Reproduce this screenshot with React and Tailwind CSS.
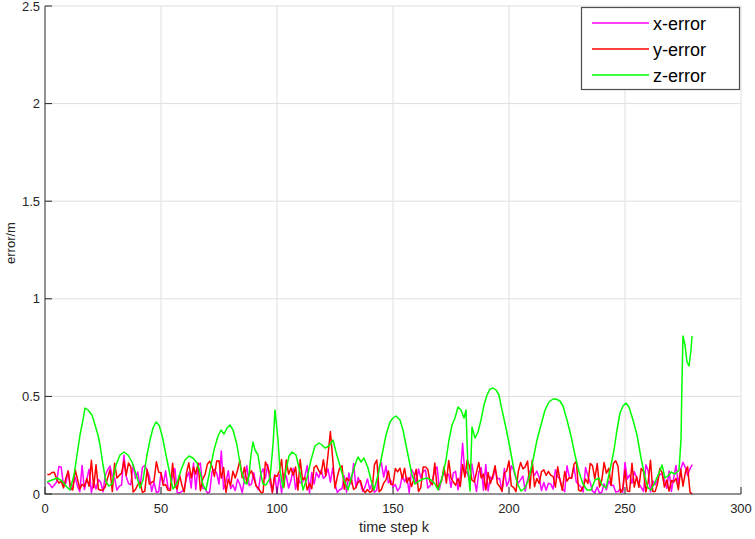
import React from 'react'

// axes mapping (pixels)
const X0 = 45, X1 = 741, Y0 = 494, Y1 = 6
const px = k => X0 + (k / 300) * (X1 - X0)
const py = v => Y0 - (v / 2.5) * (Y0 - Y1)

function rng(seed) {
  let a = seed
  return () => {
    a |= 0; a = (a + 0x6D2B79F5) | 0
    let t = Math.imul(a ^ (a >>> 15), 1 | a)
    t = (t + Math.imul(t ^ (t >>> 7), 61 | t)) ^ t
    return ((t ^ (t >>> 14)) >>> 0) / 4294967296
  }
}

// z-error traced from the figure, in pixel coords
const GREEN = [[47,482],[52,480],[57,478],[62,481],[66,486],[70,490],[74,475],[77,455],[80,435],[83,420],[85,408],[88,410],[92,415],[95,425],[98,435],[100,445],[103,465],[106,482],[109,486],[112,484],[116,465],[120,455],[124,452],[128,455],[132,462],[136,474],[140,488],[143,480],[147,455],[150,440],[153,428],[156,422],[159,425],[162,435],[166,455],[170,475],[173,489],[177,483],[181,470],[185,460],[189,456],[193,458],[197,463],[200,472],[203,485],[206,490],[210,470],[214,450],[218,436],[221,430],[224,434],[227,428],[230,425],[233,430],[237,445],[241,470],[245,483],[247,484],[249,475],[251,455],[253,442],[255,450],[258,455],[261,475],[263,484],[266,485],[270,478],[273,445],[275,410],[278,440],[280,470],[283,488],[286,470],[289,456],[292,452],[296,455],[300,472],[303,490],[307,478],[311,460],[315,446],[319,443],[322,445],[325,448],[329,446],[333,440],[336,452],[340,466],[344,480],[348,490],[352,475],[356,462],[358,457],[361,462],[364,458],[368,468],[371,480],[374,490],[378,475],[382,455],[386,435],[390,422],[393,418],[396,416],[400,420],[403,430],[406,445],[409,460],[412,475],[415,484],[419,481],[423,479],[427,478],[431,480],[435,484],[438,490],[442,478],[446,460],[449,440],[452,425],[455,418],[458,407],[461,410],[464,418],[466,410],[468,470],[470,491],[472,427],[475,438],[478,432],[481,420],[484,405],[487,395],[490,389],[493,388],[496,390],[499,395],[502,410],[506,428],[510,448],[514,470],[518,485],[521,491],[525,488],[529,478],[533,460],[537,440],[541,425],[545,410],[549,402],[553,399],[556,399],[560,401],[563,406],[567,420],[571,436],[575,455],[579,472],[583,484],[587,490],[591,490],[595,480],[599,478],[602,485],[606,488],[610,470],[614,450],[617,430],[620,413],[623,406],[626,403],[629,407],[633,420],[637,435],[641,458],[645,477],[648,488],[651,490],[655,482],[659,473],[662,465],[665,478],[668,476],[671,472],[675,474],[679,470],[681,440],[682,380],[683,336],[685,345],[687,362],[689,366],[691,350],[692,336]]

function noisy(seed, base, amp, spikes) {
  const r = rng(seed)
  const pts = []
  for (let k = 1; k <= 279; k++) {
    let v = base + Math.pow(r(), 1.4) * amp
    if (spikes[k] !== undefined) v = spikes[k]
    pts.push([px(k), py(v)])
  }
  return pts
}

const RED = noisy(7, 0.008, 0.17, { 1: 0.1, 2: 0.1, 3: 0.11, 122: 0.2, 123: 0.32, 124: 0.18, 279: 0 })
const MAG = noisy(21, 0.005, 0.16, { 1: 0.06, 2: 0.05, 34: 0.2, 76: 0.22, 180: 0.26, 278: 0.13, 279: 0.15 })

const toPath = pts => pts.map((p, i) => `${i ? 'L' : 'M'}${p[0].toFixed(1)} ${p[1].toFixed(1)}`).join('')

const XT = [0, 50, 100, 150, 200, 250, 300]
const YT = [0, 0.5, 1, 1.5, 2, 2.5]

const LEGEND = [
  { label: 'x-error', color: '#ff00ff', y: 23 },
  { label: 'y-error', color: '#ff0000', y: 49 },
  { label: 'z-error', color: '#00ff00', y: 75 },
]

export default function App() {
  return (
    <div className="w-[755px] h-[539px] bg-white overflow-hidden font-['Liberation_Sans',Arial,sans-serif]">
      <svg width="755" height="539" viewBox="0 0 755 539">
        {/* grid */}
        {XT.slice(1).map(t => (
          <line key={'gx' + t} x1={px(t)} x2={px(t)} y1={Y1} y2={Y0} stroke="#dedede" strokeWidth="1" />
        ))}
        {YT.slice(1).map(t => (
          <line key={'gy' + t} x1={X0} x2={X1} y1={py(t)} y2={py(t)} stroke="#dedede" strokeWidth="1" />
        ))}

        {/* data */}
        <path d={toPath(MAG)} fill="none" stroke="#ff00ff" strokeWidth="1.5" strokeLinejoin="round" />
        <path d={toPath(RED)} fill="none" stroke="#ff0000" strokeWidth="1.5" strokeLinejoin="round" />
        <path d={toPath(GREEN)} fill="none" stroke="#00ff00" strokeWidth="1.5" strokeLinejoin="round" />

        {/* axes */}
        <line x1={X0} x2={X0} y1={Y1} y2={Y0 + 0.5} stroke="#262626" strokeWidth="1" />
        <line x1={X0} x2={X1} y1={Y0} y2={Y0} stroke="#262626" strokeWidth="1" />
        {XT.map(t => (
          <g key={'xt' + t}>
            <line x1={px(t)} x2={px(t)} y1={Y0} y2={Y0 - 7} stroke="#262626" strokeWidth="1" />
            <text x={px(t)} y={513} fontSize="13" fill="#262626" textAnchor="middle">{t}</text>
          </g>
        ))}
        {YT.map(t => (
          <g key={'yt' + t}>
            <line x1={X0} x2={X0 + 7} y1={py(t)} y2={py(t)} stroke="#262626" strokeWidth="1" />
            <text x={40} y={py(t) + 4.5} fontSize="13" fill="#262626" textAnchor="end">{t}</text>
          </g>
        ))}

        <text x={394} y={532} fontSize="14.5" fill="#262626" textAnchor="middle">time step k</text>
        <text x={0} y={0} fontSize="13" fill="#262626" textAnchor="middle" transform="translate(15 243) rotate(-90)">error/m</text>

        {/* legend */}
        <rect x="581.5" y="7.5" width="158" height="82" fill="#ffffff" stroke="#4d4d4d" strokeWidth="1.2" />
        {LEGEND.map(l => (
          <g key={l.label}>
            <line x1="592" x2="649" y1={l.y} y2={l.y} stroke={l.color} strokeWidth="1.5" />
            <text x="653" y={l.y + 6.5} fontSize="18" fill="#000">{l.label}</text>
          </g>
        ))}
      </svg>
    </div>
  )
}
